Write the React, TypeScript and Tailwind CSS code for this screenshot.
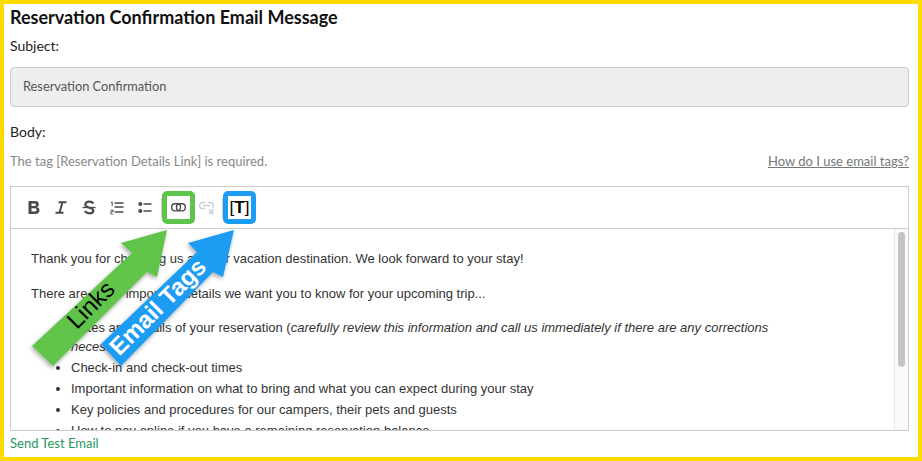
const Bold = () => (
  <svg width="14" height="15" viewBox="0 0 14 15" className="text-[#4a4a4a]">
    <path d="M1.500 1h6.500c2.500 0 3.800 1.200 3.800 3.200 0 1.300-.7 2.300-1.900 2.800 1.500.4 2.600 1.500 2.600 3.200 0 2.300-1.600 3.800-4.300 3.800H1.500V1zM4.500 3.400v2.600h3c.9 0 1.400-.5 1.400-1.300s-.5-1.300-1.400-1.300h-3zM4.500 8.200v3.200h3.300c1.100 0 1.800-.6 1.800-1.600S8.900 8.200 7.800 8.200H4.500z" fill="currentColor" fillRule="evenodd" />
  </svg>
);

const Italic = () => (
  <svg width="14" height="15" viewBox="0 0 14 15" fill="none" stroke="#4a4a4a" strokeWidth="2">
    <path d="M4.500 2.200h8M1.500 12.800h8M8.500 2.200 5.500 12.800" />
  </svg>
);

const Strike = () => (
  <svg width="14" height="15" viewBox="0 0 14 15" fill="none" stroke="#4a4a4a" strokeWidth="2.200">
    <path d="M11.300 3.600C10.500 2.300 9 1.700 7.200 1.700 5 1.700 3.300 2.800 3.300 4.500c0 4 8 2.400 8 6 0 1.700-1.800 2.800-4 2.800-1.900 0-3.500-.7-4.300-2.200" />
    <path d="M.5 7.500h13" strokeWidth="1.300" />
  </svg>
);

const OrderedList = () => (
  <svg width="14" height="14" viewBox="0 0 14 14" fill="none" stroke="#4a4a4a">
    <path d="M.8 1.800 2.200 1v4.200" strokeWidth="1" />
    <path d="M4.500 2h9M4.500 6h9M4.500 11h9" strokeWidth="1.300" />
    <path d="M.6 9h2.600v1.500H.8V13h2.600" strokeWidth=".9" />
  </svg>
);

const BulletList = () => (
  <svg width="14" height="14" viewBox="0 0 14 14" fill="none" stroke="#4a4a4a">
    <circle cx="2.300" cy="3" r="2" fill="#4a4a4a" stroke="none" />
    <circle cx="2.300" cy="10" r="2" fill="#4a4a4a" stroke="none" />
    <path d="M5.500 3h8M5.500 10h8" strokeWidth="1.300" />
  </svg>
);

const LinkIcon = () => (
  <svg width="15" height="9" viewBox="0 0 15 9" fill="none" stroke="#4a4a4a" strokeWidth="1.400">
    <rect x=".7" y=".7" width="8.800" height="7.200" rx="3.400" />
    <rect x="5.500" y=".7" width="8.800" height="7.200" rx="3.400" />
  </svg>
);

const Unlink = () => (
  <svg width="16" height="14" viewBox="0 0 16 14" fill="none" stroke="#cdcdcd" strokeWidth="1.400">
    <path d="M6.500 1.500H3.500a3 3 0 0 0 0 6H6M4 4.500h7M9 1.500h2.500a3 3 0 0 1 2 5.200" />
    <path d="m10 8.500 4.500 4.500M14.500 8.500 10 13" strokeWidth="1.700" />
  </svg>
);

const Arrow = ({ points, fill }: { points: string; fill: string }) => (
  <polygon points={points} fill={fill} filter="url(#arrow-shadow)" />
);

export default function App() {
  return (
    <div className="relative h-[461px] w-[922px] overflow-hidden border-4 border-[#ffdb00] bg-white font-['Lato','Open_Sans',sans-serif] text-[#333]">
      <div className="flex h-full flex-col pl-[6px] pr-[9px]">
        <h1 className="mt-[2px] h-[22px] text-[18px] font-bold leading-[22px] text-[#111]">
          Reservation Confirmation Email Message
        </h1>
        <p className="mt-[9px] h-[18px] text-[14px] leading-[18px] text-[#222]">Subject:</p>
        <div className="mt-[12px] flex h-[40px] items-center rounded-[4px] border border-[#cccccc] bg-[#eeeeee] px-3 text-[12.800px] text-[#555]">
          Reservation Confirmation
        </div>
        <p className="mt-[16px] h-[18px] text-[14px] leading-[18px] text-[#222]">Body:</p>
        <div className="mt-[12px] flex h-[18px] items-center justify-between text-[13px] text-[#888]">
          <span>The tag [Reservation Details Link] is required.</span>
          <a className="text-[#777] underline">How do I use email tags?</a>
        </div>
        <div className="mt-[15px] flex h-[245px] flex-col border border-[#cccccc]">
          <div className="flex h-[42px] shrink-0 items-center border-b border-[#cccccc] pl-[16px]">
            <span className="flex w-[27px]"><Bold /></span>
            <span className="flex w-[28px]"><Italic /></span>
            <span className="flex w-[28px]"><Strike /></span>
            <span className="flex w-[28px]"><OrderedList /></span>
            <span className="flex w-[23px]"><BulletList /></span>
            <span className="h-[20px] w-px bg-[#cccccc]" />
            <span className="flex h-[33px] w-[33px] items-center justify-center rounded-[5px] border-[5px] border-[#5fc44a]">
              <LinkIcon />
            </span>
            <span className="ml-[4px] flex w-[23px]"><Unlink /></span>
            <span className="h-[20px] w-px bg-[#cccccc]" />
            <span className="flex h-[33px] w-[33px] items-center justify-center rounded-[5px] border-[5px] border-[#1c9cf2] font-['Liberation_Sans',sans-serif] text-[17px] leading-none text-black">
              [<b>T</b>]
            </span>
          </div>
          <div className="flex min-h-0 flex-1">
            <div className="min-w-0 flex-1 overflow-hidden pl-5 pr-[60px] pt-[19px] font-['Liberation_Sans',sans-serif] text-[13px] leading-[21px] text-[#333]">
              <p>Thank you for choosing us as your vacation destination. We look forward to your stay!</p>
              <p className="mt-[14px]">There are a few important details we want you to know for your upcoming trip...</p>
              <ul className="mt-[14px] list-disc pl-10">
                <li className="mb-px leading-[19px]">
                  Dates and details of your reservation (
                  <em>carefully review this information and call us immediately if there are any corrections necessary</em>)
                </li>
                <li>Check-in and check-out times</li>
                <li>Important information on what to bring and what you can expect during your stay</li>
                <li>Key policies and procedures for our campers, their pets and guests</li>
                <li>How to pay online if you have a remaining reservation balance</li>
              </ul>
            </div>
            <div className="w-[14px] shrink-0 border-l border-[#e8e8e8] bg-[#fafafa] px-[3px] pt-[3px]">
              <div className="h-[135px] rounded-full bg-[#c4c4c4]" />
            </div>
          </div>
        </div>
        <a className="mt-[4px] text-[13px] leading-[16px] text-[#1f9a5c]">Send Test Email</a>
      </div>

      {/* annotation arrows pasted over the screenshot */}
      <svg className="absolute -left-1 -top-1 h-[461px] w-[922px]" viewBox="0 0 922 461">
        <defs>
          <filter id="arrow-shadow" x="-20%" y="-20%" width="140%" height="140%">
            <feDropShadow dx="-1" dy="2" stdDeviation="2" floodColor="#000" floodOpacity="0.35" />
          </filter>
        </defs>
        <Arrow points="167,230 121,243 132,253 32,346 53,366 147,272 157,277" fill="#5fc44a" />
        <Arrow points="234,230 188,243 197,252 101,344 121,366 213,272 223,277" fill="#1c9cf2" />
        <text x="92" y="306" transform="rotate(-45 92 306)" textAnchor="middle" dominantBaseline="middle" fontFamily="Liberation Sans, sans-serif" fontSize="24" fill="#000">Links</text>
        <text x="159" y="308" transform="rotate(-45 159 308)" textAnchor="middle" dominantBaseline="middle" fontFamily="Liberation Sans, sans-serif" fontWeight="bold" fontSize="24" fill="#fff">Email Tags</text>
      </svg>
    </div>
  );
}
